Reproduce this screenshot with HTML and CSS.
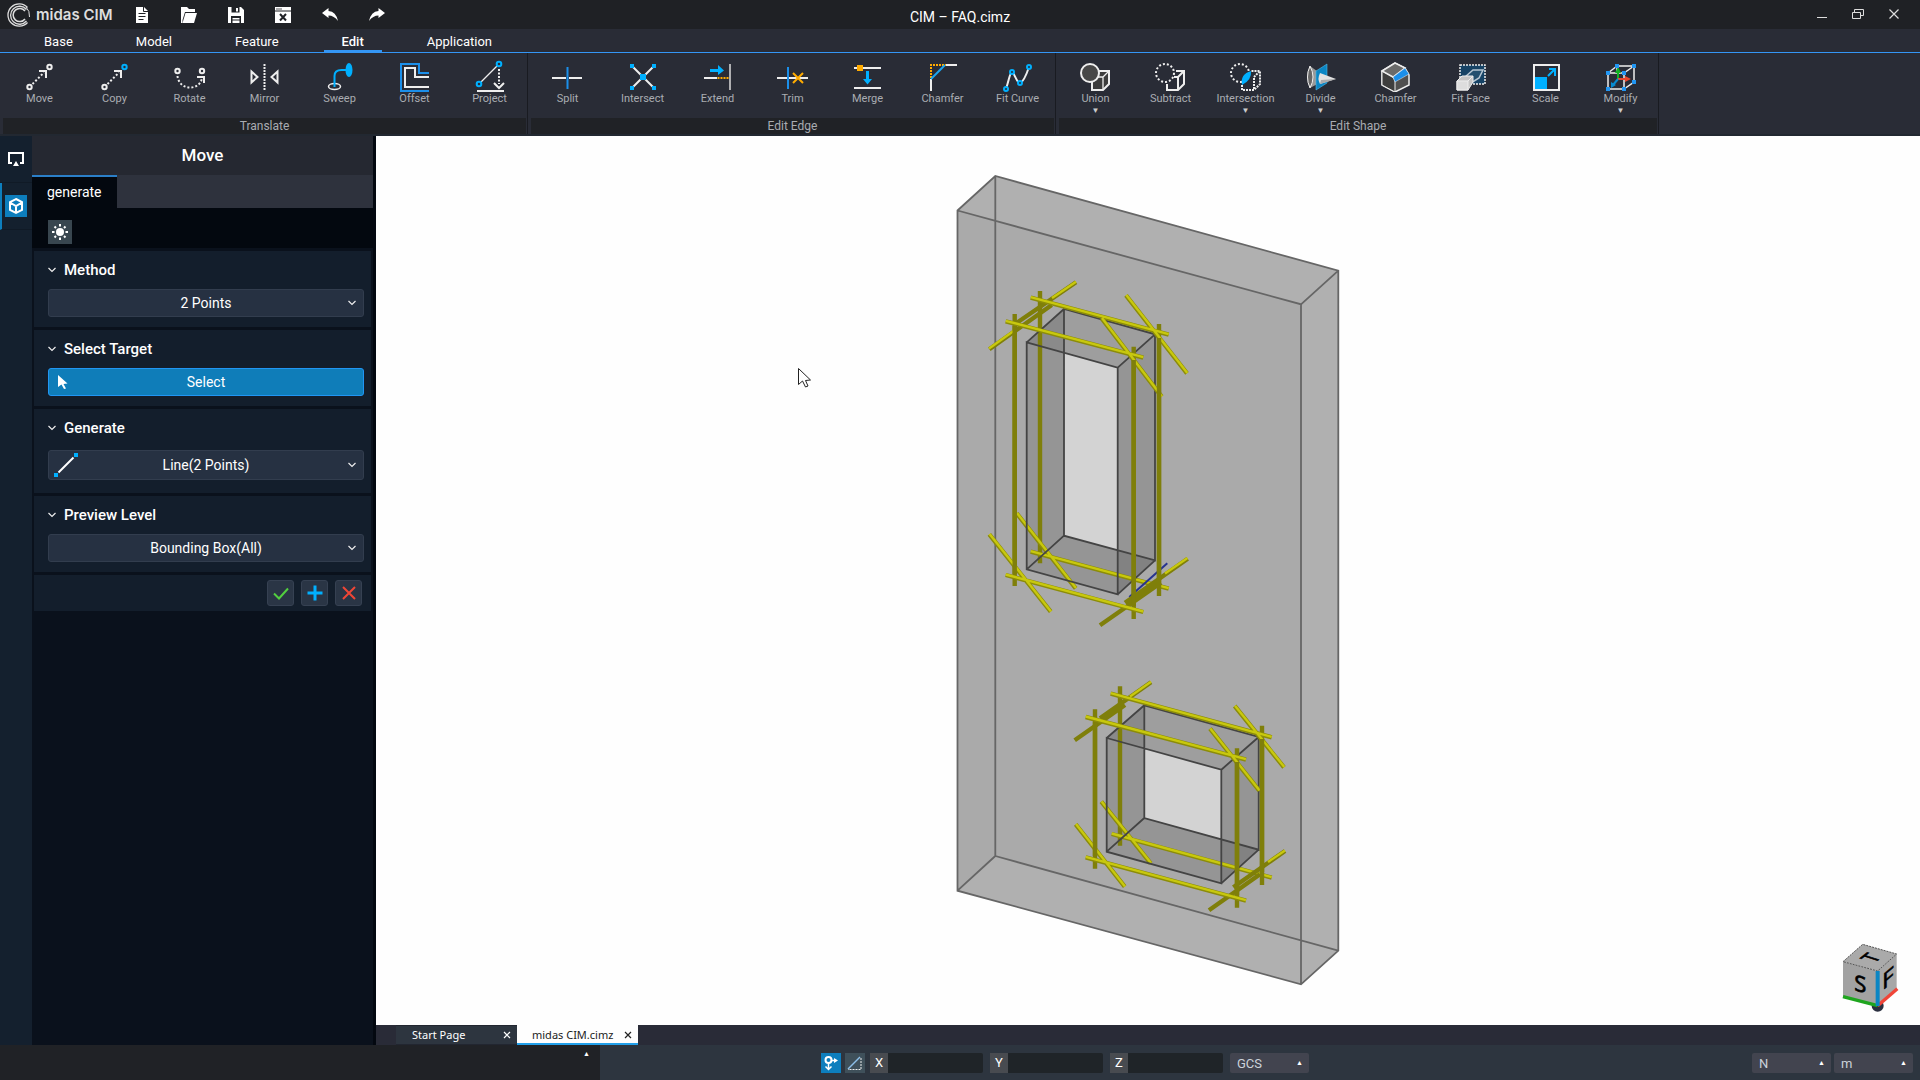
FILE: index.html
```html
<!DOCTYPE html>
<html lang="en">
<head>
<meta charset="utf-8">
<meta name="viewport" content="width=device-width, initial-scale=1">
<title>CIM – FAQ.cimz</title>
<link rel="stylesheet" href="styles.css">
</head>
<body>
<header class="titlebar">
<div class="titlebar-left">
<div class="brand">
<svg class="logo" viewBox="0 0 24 24" fill="none" stroke="#ddd"><path d="M20.500 4.500A11.200 11.200 0 1 0 20.500 19.500" stroke-width="1.300"/><path d="M19.500 6.500A9 9 0 1 0 19.500 18" stroke-width="1.300"/><path d="M18 8A6.600 6.600 0 1 0 18 16" stroke-width="1.500"/><path d="M19 4Q23 8 22.500 14" stroke-width="1"/></svg>
<span class="brand-name">midas CIM</span>
</div>
<nav class="quick" aria-label="Quick access">
<button type="button" aria-label="New"><svg viewBox="0 0 16 16"><path d="M2 0h8l4 4v12H2z" fill="#fff"/><path d="M9.500 0v4.500H14M4.500 6.500h7M4.500 9.500h7M4.500 12.500h5" stroke="#202226" fill="none"/></svg></button>
<button type="button" aria-label="Open"><svg viewBox="0 0 16 16"><path d="M0 0h6l2 2h6v3H4L1.500 13V16H0z" fill="#fff"/><path d="M4.500 6H16l-3 10H1.500z" fill="#fff"/></svg></button>
<button type="button" aria-label="Save"><svg viewBox="0 0 16 16"><path d="M0 0h13l3 3v13H0z" fill="#fff"/><path d="M3.500 0h8v5.500h-8zM3 9h10v7H3z" fill="#202226"/><path d="M8 1h2v3.500H8zM4.500 11h7v1.500h-7zM4.500 13.500h7V16h-7z" fill="#fff"/></svg></button>
<button type="button" aria-label="Close file"><svg viewBox="0 0 16 16"><path d="M0 0h16v16H0z" fill="#fff"/><path d="M0 4h16" stroke="#202226"/><path d="M1.500 2h5" stroke="#202226" stroke-width="1.500" stroke-dasharray="1 1"/><path d="M5 7l6 6.500M11 7l-6 6.500" stroke="#202226" stroke-width="2"/></svg></button>
<button type="button" aria-label="Undo"><svg viewBox="0 0 16 16"><path d="M0 6l6.500-5v3Q14 4.500 16 14 12 8.500 6.500 8.500V11z" fill="#fff"/></svg></button>
<button type="button" aria-label="Redo"><svg viewBox="0 0 16 16"><path d="M16 6L9.500 1v3Q2 4.500 0 14 4 8.500 9.500 8.500V11z" fill="#fff"/></svg></button>
</nav>
</div>
<h1 class="doc-title">CIM – FAQ.cimz</h1>
<div class="window-controls">
<button type="button" aria-label="Minimize"><svg viewBox="0 0 12 12"><path d="M1 9.500h10" stroke="#ddd"/></svg></button>
<button type="button" aria-label="Restore"><svg viewBox="0 0 12 12" fill="none" stroke="#ddd"><path d="M.5 4.500h8v6h-8zM2.500 4V1.500h9v6H9"/></svg></button>
<button type="button" aria-label="Close"><svg viewBox="0 0 12 12"><path d="M1.500 1.500l9 9M10.500 1.500l-9 9" stroke="#ddd" stroke-width="1.200"/></svg></button>
</div>
</header>

<nav class="menu">
<a href="#base">Base</a>
<a href="#model">Model</a>
<a href="#feature">Feature</a>
<a href="#edit" class="active">Edit</a>
<a href="#application">Application</a>
</nav>

<div class="ribbon">
<section class="group">
<div class="tools">
<button type="button" class="tool"><svg viewBox="0 0 32 32" fill="none" stroke="#eee" stroke-width="2"><circle cx="5.500" cy="27" r="2.200"/><circle cx="25.500" cy="7" r="2.200"/><path d="M8.500 24L20 12.500" stroke-dasharray="2 2"/><path d="M15 11h7v7"/></svg>Move</button>
<button type="button" class="tool"><svg viewBox="0 0 32 32" fill="none" stroke="#eee" stroke-width="2"><circle cx="5.500" cy="27" r="2.200"/><circle cx="25.500" cy="7" r="2.200" stroke="#00b0ff"/><path d="M8.500 24L20 12.500" stroke-dasharray="2 2"/><path d="M15 11h7v7"/></svg>Copy</button>
<button type="button" class="tool"><svg viewBox="0 0 32 32" fill="none" stroke="#eee" stroke-width="2"><circle cx="3.500" cy="11" r="2.200"/><circle cx="28" cy="11" r="2.200"/><path d="M3.500 16C5 31 26 31 28 18" stroke-dasharray="2 2"/><path d="M23 17h7v6"/></svg>Rotate</button>
<button type="button" class="tool"><svg viewBox="0 0 32 32" fill="none" stroke="#eee" stroke-width="2"><path d="M15.500 4v26" stroke-dasharray="2 1"/><path d="M2.500 11.500v11l6-5.500zM28.500 11.500v11l-6-5.500z"/></svg>Mirror</button>
<button type="button" class="tool"><svg viewBox="0 0 32 32" fill="none"><ellipse cx="10.500" cy="26.500" rx="6" ry="3" stroke="#eee" stroke-width="1.500"/><path d="M10.500 27V16q0-6 7-6h6" stroke="#00b0ff" stroke-width="2"/><ellipse cx="25" cy="10" rx="3.500" ry="7" fill="#00b0ff"/></svg>Sweep</button>
<button type="button" class="tool"><svg viewBox="0 0 32 32" fill="none" stroke-width="2"><path d="M30 13H20V4H2v27h28" stroke="#1b8fea"/><path d="M30 17H16V8H6v19h24" stroke="#eee"/></svg>Offset</button>
<button type="button" class="tool"><svg viewBox="0 0 32 32" fill="none" stroke="#eee" stroke-width="2"><path d="M7 22L23 6" stroke-width="1.300"/><circle cx="5" cy="24" r="2.300" stroke="#00b0ff"/><circle cx="25" cy="4" r="2.300" stroke="#00b0ff"/><path d="M25 9v15" stroke-dasharray="2 1.500"/><path d="M20 23l5 5 5-5M3 31h27"/></svg>Project</button>
</div>
<h2 class="group-name">Translate</h2>
</section>
<section class="group">
<div class="tools">
<button type="button" class="tool"><svg viewBox="0 0 32 32" stroke-width="2"><path d="M0 18h14M17 18h13" stroke="#eee"/><path d="M15.500 7v22" stroke="#1b8fea"/></svg>Split</button>
<button type="button" class="tool"><svg viewBox="0 0 32 32"><path d="M5 6l22 22M27 6L5 28" stroke="#eee" stroke-width="2"/><path d="M3 4h4v4H3zM25 4h4v4h-4zM3 26h4v4H3zM25 26h4v4h-4zM13 14h6v6h-6z" fill="#00b0ff"/></svg>Intersect</button>
<button type="button" class="tool"><svg viewBox="0 0 32 32" stroke-width="2"><path d="M28 4v26" stroke="#ddd" stroke-width="1.500"/><path d="M2 18h13" stroke="#eee"/><path d="M15.500 18H27" stroke="#ffab00" stroke-dasharray="2 1"/><path d="M8 9h8V5l6 5.500-6 4.500v-3H8z" fill="#00b0ff"/></svg>Extend</button>
<button type="button" class="tool"><svg viewBox="0 0 32 32" stroke-width="2"><path d="M0 18h31" stroke="#eee"/><path d="M11 7v22" stroke="#1b8fea"/><path d="M16 13l10 10M26 13L16 23" stroke="#ffab00"/></svg>Trim</button>
<button type="button" class="tool"><svg viewBox="0 0 32 32"><path d="M2 8h27M2 28h27" stroke="#eee" stroke-width="2"/><path d="M5 5h6v6H5z" fill="#ffab00"/><path d="M14 11h3v8h3l-4.500 5.500L11 19h3z" fill="#00b0ff"/></svg>Merge</button>
<button type="button" class="tool"><svg viewBox="0 0 32 32" fill="none" stroke-width="2"><path d="M4 18V5h15" stroke="#ffab00" stroke-dasharray="2 1"/><path d="M19 5h11M4 19v12" stroke="#eee"/><path d="M4 19L18 5" stroke="#1ba6f0"/></svg>Chamfer</button>
<button type="button" class="tool"><svg viewBox="0 0 32 32" fill="#292c36" stroke-width="2"><path d="M4 29C7 20 8 12 10 12s5 12 8 11S25 13 27 7" fill="none" stroke="#eee"/><g stroke="#00b0ff"><circle cx="4" cy="29" r="2"/><circle cx="10" cy="12" r="2"/><circle cx="18" cy="23" r="2"/><circle cx="27" cy="7" r="2"/></g></svg>Fit Curve</button>
</div>
<h2 class="group-name">Edit Edge</h2>
</section>
<section class="group">
<div class="tools">
<button type="button" class="tool"><svg viewBox="0 0 32 32" stroke="#eee" stroke-width="2"><path d="M12 17l6-6h11v13l-6 6H12z" fill="#3c3c3c"/><path d="M12 17h11v13M23 17l6-6" fill="none" stroke-width="1.300"/><circle cx="10" cy="13" r="9" fill="#484848"/></svg>Union<span class="more">▼</span></button>
<button type="button" class="tool"><svg viewBox="0 0 32 32" fill="none" stroke="#eee" stroke-width="2"><path d="M12 24v6h11l6-6V11h-8M23 30V17h-4M23 17l6-6"/><circle cx="10" cy="13" r="9" stroke-dasharray="2 2"/></svg>Subtract</button>
<button type="button" class="tool"><svg viewBox="0 0 32 32" fill="none" stroke="#eee" stroke-width="2"><path d="M12 25v5h12l6-6V11h-9M24 29V17l5-5" stroke-dasharray="2 1"/><circle cx="10" cy="13" r="9" stroke-dasharray="2 2"/><path d="M12 25q-2-11 9-14 1 9-9 14z" fill="#00b0ff" stroke="none"/></svg>Intersection<span class="more">▼</span></button>
<button type="button" class="tool"><svg viewBox="0 0 32 32"><path d="M5 6l11 8v8L5 28q-6-11 0-22z" fill="#999"/><path d="M5 6q6 11 0 22Q0 17 5 6z" fill="#666" stroke="#eee"/><path d="M11 11L22 4v19l-11 7z" fill="#0b86c4" stroke="#53b9e8" stroke-width=".6"/><path d="M15 13l16 6-16 5q-3-5 0-11z" fill="#e2e2e2"/><path d="M16 20l15-1-16 5z" fill="#aaa"/></svg>Divide<span class="more">▼</span></button>
<button type="button" class="tool"><svg viewBox="0 0 32 32" stroke="#eee" stroke-width="1.500"><path d="M15 3l10 5 4 7v10l-14 7-13-7V11z" fill="#505050"/><path d="M2 11l11 6 2 4v11L2 25z" fill="#3e3e3e" stroke-width="1"/><path d="M15 3L2 11l11 6 12-9z" fill="#6a6a6a"/><path d="M13 17l12-9 4 6-14 8z" fill="#1b8fea" stroke-width=".5"/></svg>Chamfer</button>
<button type="button" class="tool"><svg viewBox="0 0 32 32" stroke="#eee"><path d="M5 5h25v19H5z" fill="#174365" stroke-width="1.500" stroke-dasharray="2 1"/><path d="M10 17l8-7h10l-4 8-8 5z" fill="#24506f" stroke="#b7c6d2" stroke-width="1.500"/><path d="M2 21l5-5h11v6l-5 8H2z" fill="#c5c5c5"/><path d="M2 21h11v9H2z" fill="#ddd"/><path d="M13 21l5-5"/></svg>Fit Face</button>
<button type="button" class="tool"><svg viewBox="0 0 32 32"><path d="M4 5h25v25H4z" fill="none" stroke="#eee" stroke-width="2"/><path d="M5 17h12v12H5z" fill="#00b0ff"/><path d="M18 16l7-7M19 9h6v7" fill="none" stroke="#00b0ff" stroke-width="2"/></svg>Scale</button>
<button type="button" class="tool"><svg viewBox="0 0 32 32" fill="none" stroke-width="2"><path d="M3 13h16v16H3zM12 6h17v16L19 29M3 13l9-7M19 13l10-7M12 6v6" stroke="#eee" stroke-width="1.500"/><path d="M13 19V11" stroke="#13b324"/><path d="M10 13l3-6 3 6z" fill="#13b324"/><path d="M13 19h8" stroke="#e8452c"/><path d="M20 16l6 3-6 3z" fill="#e8452c"/><path d="M13 19l-5 6" stroke="#078bd0"/><path d="M6 22v6l5-3z" fill="#078bd0"/><path d="M1 11h4v4H1zM17 11h4v4h-4zM1 27h4v4H1zM17 27h4v4h-4zM10 4h4v4h-4zM27 4h4v4h-4zM27 20h4v4h-4z" fill="#2196f3"/></svg>Modify<span class="more">▼</span></button>
</div>
<h2 class="group-name">Edit Shape</h2>
</section>
</div>

<div class="workspace">
<nav class="rail" aria-label="Panels">
<button type="button" aria-label="Display"><svg class="rail-icon" viewBox="0 0 22 22"><path d="M7 15H4V5h14v10h-3" fill="none" stroke="#fff" stroke-width="2"/><path d="M11 13l3 5H8z" fill="#fff"/></svg></button>
<button type="button" class="active" aria-label="Model"><svg class="rail-icon" viewBox="0 0 22 22" fill="none" stroke="#fff" stroke-width="2"><path d="M11 4l6 3v8l-6 3-6-3V7zM5 7.500l6 3.500 6-3.500M11 11v7"/></svg></button>
</nav>
<aside class="panel">
<h2 class="panel-title">Move</h2>
<div class="panel-tabs"><button type="button">generate</button></div>
<div class="panel-tools"><button type="button" aria-label="Highlight"><svg viewBox="0 0 24 24"><circle cx="12" cy="12" r="4" fill="#fff"/><path d="M12 4v2.500M12 17.500V20M4 12h2.500M17.500 12H20M6.500 6.500l1.500 1.500M16 16l1.500 1.500M17.500 6.500L16 8M8 16l-1.500 1.500" stroke="#fff" stroke-width="2"/></svg></button></div>
<form class="panel-form">
<details class="block" open>
<summary><svg class="chev" viewBox="0 0 8 8"><path d="M.5 2L4 5.500 7.500 2"/></svg><label for="method">Method</label></summary>
<div class="field">
<select id="method"><option>2 Points</option></select>
<svg class="chev drop" viewBox="0 0 8 8"><path d="M.5 2L4 5.500 7.500 2"/></svg>
</div>
</details>
<details class="block" open>
<summary><svg class="chev" viewBox="0 0 8 8"><path d="M.5 2L4 5.500 7.500 2"/></svg>Select Target</summary>
<button type="button" class="pick"><svg viewBox="0 0 10 14"><path d="M0 0l9.500 8.500-4 .5 2.500 4.500-2 .5-2.500-4.500L0 12z" fill="#fff"/></svg>Select</button>
</details>
<details class="block" open>
<summary><svg class="chev" viewBox="0 0 8 8"><path d="M.5 2L4 5.500 7.500 2"/></svg><label for="generate">Generate</label></summary>
<div class="field tall">
<select id="generate"><option>Line(2 Points)</option></select>
<svg class="line-icon" viewBox="0 0 24 24"><path d="M4.500 19.500L19.500 4.500" stroke="#fff" stroke-width="2"/><path d="M0 20h4v4H0zM20 0h4v4h-4z" fill="#00b0ff"/></svg>
<svg class="chev drop" viewBox="0 0 8 8"><path d="M.5 2L4 5.500 7.500 2"/></svg>
</div>
</details>
<details class="block" open>
<summary><svg class="chev" viewBox="0 0 8 8"><path d="M.5 2L4 5.500 7.500 2"/></svg><label for="preview">Preview Level</label></summary>
<div class="field">
<select id="preview"><option>Bounding Box(All)</option></select>
<svg class="chev drop" viewBox="0 0 8 8"><path d="M.5 2L4 5.500 7.500 2"/></svg>
</div>
</details>
<div class="actions">
<button type="button" aria-label="OK"><svg viewBox="0 0 16 16"><path d="M1 8.500l5 5L15 3.500" stroke="#52cf3f"/></svg></button>
<button type="button" aria-label="Apply"><svg viewBox="0 0 16 16"><path d="M8 .5v15M.5 8h15" stroke="#00b0ff" stroke-width="3"/></svg></button>
<button type="button" aria-label="Cancel"><svg viewBox="0 0 16 16"><path d="M2 2l12 12M14 2L2 14" stroke="#ef4636"/></svg></button>
</div>
</form>
</aside>

<main class="stage">
<div class="canvas">
<svg class="scene" viewBox="376 136 1544 889">
<!-- wall -->
<path d="M957.500 210.500L995.300 176 1338.300 270.700V950.700L1301 984.300 957.500 890.700z" fill="#b0b0b0"/>
<path d="M957.500 210.500L1301 304.300V940.400L995.300 856 957.500 890.700z" fill="#aaa"/>
<g class="edge">
<path d="M957.500 210.500L995.300 176 1338.300 270.700V950.700L1301 984.300 957.500 890.700zM957.500 210.500L1301 304.300V984.300M1301 304.300L1338.300 270.700M995.300 176V856L957.500 890.700M995.300 856L1338.300 950.700"/>
</g>
<!-- upper opening -->
<g class="shade">
<path d="M1026.700 342.300L1064 309V535.700L1026.700 569.300z"/>
<path d="M1117.700 367.700L1155 334.300V560.300L1117.700 594.300z"/>
<path class="soft" d="M1026.700 342.300L1064 309 1155 334.300 1117.700 367.700z"/>
<path d="M1026.700 569.300L1064 535.700 1155 560.300 1117.700 594.300z"/>
</g>
<path d="M1064 352.700L1117.700 367.700V550.200L1064 535.700z" fill="#d3d3d3"/>
<path class="bar dark" d="M1040 291V563.300"/>
<path class="bar" d="M1030.700 551.700L1168.700 588.700M1016.700 513.300L1075.700 588.300"/>
<path class="shine" d="M1030.700 551.200L1168.700 588.200M1017 513L1076 588"/>
<path class="edge strong" d="M1026.700 342.300L1117.700 367.700V594.300L1026.700 569.300zM1064 309L1155 334.300V560.300L1064 535.700zM1026.700 342.300L1064 309M1117.700 367.700L1155 334.300M1026.700 569.300L1064 535.700M1117.700 594.300L1155 560.300"/>
<path d="M1129.300 597L1167.300 563.300" stroke="#26338f" stroke-width="2"/>
<path class="bar dark" d="M989.300 349.300L1051.700 305M1015 324L1076 282.300M1100 625.300L1161 582.700M1125 602.700L1187.700 558.700"/>
<path class="bar dark" d="M1014.700 314V586M1133.700 346.700V619M1159 324V596"/>
<path class="bar" d="M1005.700 321.300L1143.300 357.700M1030.700 297.700L1168.700 334.700M1005.700 575L1143.300 612M1126 295.300L1187 373.300M1101.700 318.300L1161.700 396.700M989.300 534.300L1050.700 611.700"/>
<path class="shine" d="M1005.700 320.800L1143.300 357.200M1030.700 297.200L1168.700 334.200M1005.700 574.500L1143.300 611.500M1126.300 295L1187.300 373M1102 318L1162 396.400M989.600 534L1051 611.400M989 348.600L1015 330M1052 298L1076 281.800M1165 573.500L1187.500 558"/>
<path class="bar dark" d="M1133.700 360V606M1159 338V583M1014.700 326V574"/>
<!-- lower opening -->
<g class="shade">
<path d="M1106.700 738L1144.300 705.300V818L1106.700 851.700z"/>
<path d="M1221.300 769.700L1258.700 737V849.700L1221.300 883.300z"/>
<path class="soft" d="M1106.700 738L1144.300 705.300 1258.700 737 1221.300 769.700z"/>
<path d="M1106.700 851.700L1144.300 818 1258.700 849.700 1221.300 883.300z"/>
</g>
<path d="M1144.300 748.400L1221.300 769.700V839.300L1144.300 818z" fill="#d3d3d3"/>
<path class="bar dark" d="M1120 686.300V845.700"/>
<path class="bar" d="M1111.700 834L1271.700 877.700M1101.300 801.700L1150.700 863.300"/>
<path class="shine" d="M1111.700 833.500L1271.700 877.200M1101.600 801.400L1151 863"/>
<path class="edge strong" d="M1106.700 738L1221.300 769.700V883.300L1106.700 851.700zM1144.300 705.300L1258.700 737V849.700L1144.300 818zM1106.700 738L1144.300 705.300M1221.300 769.700L1258.700 737M1106.700 851.700L1144.300 818M1221.300 883.300L1258.700 849.700"/>
<path class="bar dark" d="M1074.700 740.300L1125 705M1100 718.300L1151 682.300M1209 910.300L1260 874.300M1233.300 887.300L1285 851"/>
<path class="bar dark" d="M1095 709.300V868.700M1237 748.300V907.700M1262 725.700V885"/>
<path class="bar" d="M1085.700 717L1246 759.700M1110.700 693.700L1271.700 737.300M1085.700 857.300L1246 900.700M1234.700 706L1284 767.300M1210 728.700L1259.300 790.700M1075.700 824.300L1124.700 886.700"/>
<path class="shine" d="M1085.700 716.500L1246 759.200M1110.700 693.200L1271.700 736.800M1085.700 856.800L1246 900.200M1235 705.700L1284.300 767M1210.300 728.400L1259.600 790.400M1076 824L1125 886.400M1130 696.500L1151 681.800M1268 862L1285 850.400"/>
<path class="bar dark" d="M1237 762V895M1262 739V872M1095 722V856"/>
<!-- pointer -->
<path d="M798.500 368.500v16l4-3.500 3 6 2.500-1-2.500-5.500 5-.5z" fill="#fff" stroke="#222"/>
</svg>
<svg class="viewcube" viewBox="420 60 180 225">
<circle cx="533" cy="257" r="18" fill="#2b2f3f"/>
<path d="M429 125L533 153V257L429 230z" fill="#a2a2a2"/>
<path d="M533 153L590 102V206L533 257z" fill="#a7a7a7"/>
<path d="M429 125L488 73 590 102 533 153z" fill="#aaa" stroke="#555" stroke-width="3" stroke-dasharray="6 3"/>
<text class="face" x="0" y="0" transform="translate(463 211) skewY(14)">S</text>
<text class="face" x="0" y="0" transform="translate(547 212) skewY(-40)">F</text>
<text class="face top" x="0" y="0" transform="translate(523 130) rotate(-38) skewX(34)">T</text>
<path d="M429 230L533 257" stroke="#1ea51e" stroke-width="10"/>
<path d="M533 257L592 206" stroke="#f04538" stroke-width="10"/>
<path d="M533 153V258" stroke="#0b86c4" stroke-width="12"/>
</svg>
</div>
<div class="doc-tabs">
<div class="doc-tab"><a href="#start">Start Page</a><button type="button" aria-label="Close Start Page"><svg viewBox="0 0 8 8"><path d="M1 1l6 6M7 1L1 7"/></svg></button></div>
<div class="doc-tab current"><a href="#file">midas CIM.cimz</a><button type="button" aria-label="Close midas CIM.cimz"><svg viewBox="0 0 8 8"><path d="M1 1l6 6M7 1L1 7"/></svg></button></div>
</div>
</main>
</div>

<footer class="status">
<div class="message"><button type="button" aria-label="Show messages">▲</button></div>
<div class="coords">
<button type="button" class="snap on" aria-label="Snap"><svg viewBox="0 0 20 20" fill="none" stroke="#fff" stroke-width="2"><circle cx="7.500" cy="7" r="3"/><path d="M7.500 10v6M4.500 13.500l3 3 3-3M11 7.500h4" stroke-width="1.500"/><path d="M13 5l4 2.500-4 2.500z" fill="#fff" stroke="none"/></svg></button>
<button type="button" class="snap" aria-label="Work plane"><svg viewBox="0 0 20 20" fill="none"><path d="M3 16L15 4" stroke="#8ec0ea" stroke-width="1.500"/><path d="M16 5v11.500H3" stroke="#eee" stroke-dasharray="2 1"/></svg></button>
<div class="coord"><label for="cx">X</label><input id="cx" type="text"></div>
<div class="coord"><label for="cy">Y</label><input id="cy" type="text"></div>
<div class="coord"><label for="cz">Z</label><input id="cz" type="text"></div>
<div class="unit"><select aria-label="Coordinate system"><option>GCS</option></select><span>▲</span></div>
</div>
<div class="units">
<div class="unit"><select aria-label="Force unit"><option>N</option></select><span>▲</span></div>
<div class="unit"><select aria-label="Length unit"><option>m</option></select><span>▲</span></div>
</div>
</footer>
</body>
</html>
```
FILE: styles.css
```css
* {
 box-sizing: border-box;
}
body {
 margin: 0;
 height: 100vh;
 display: flex;
 flex-direction: column;
 overflow: hidden;
 background: #202226;
 color: #fff;
 font-family: Roboto, "Liberation Sans", sans-serif;
 font-size: 14px;
}
button, input, select {
 margin: 0;
 padding: 0;
 border: 0;
 background: none;
 color: inherit;
 font: inherit;
}
select {
 appearance: none;
}
h1, h2 {
 margin: 0;
 font-weight: normal;
}
a {
 color: inherit;
 text-decoration: none;
}
svg {
 display: block;
}

/* title bar */
.titlebar {
 display: grid;
 grid-template-columns: 1fr auto 1fr;
 align-items: center;
 height: 29px;
 background: #1f2125;
}
.titlebar-left {
 display: flex;
 align-items: center;
 gap: 22px;
 padding-left: 7px;
}
.brand {
 display: flex;
 align-items: center;
 gap: 5px;
}
.logo {
 width: 24px;
 height: 24px;
}
.brand-name {
 color: #ddd;
 font: 600 15px/20px Inter, sans-serif;
}
.quick {
 display: flex;
 gap: 31px;
}
.quick svg {
 width: 16px;
 height: 16px;
}
.doc-title {
 padding-top: 4px;
 font-size: 14px;
 line-height: 20px;
}
.window-controls {
 display: flex;
 justify-content: flex-end;
 gap: 24px;
 padding: 0 20px 2px 0;
}
.window-controls svg {
 width: 12px;
 height: 12px;
}

/* menu */
.menu {
 display: flex;
 gap: 27px;
 height: 24px;
 padding-left: 26px;
 background: #292c36;
 border-bottom: 1px solid #3496f5;
}
.menu a {
 padding: 0 18px;
 font-size: 13px;
 line-height: 26px;
}
.menu .active {
 font-weight: 500;
 border-bottom: 2px solid #3496f5;
}

/* ribbon */
.ribbon {
 display: flex;
 height: 83px;
 background: #292c36;
 border-bottom: 2px solid #222831;
}
.group {
 padding-left: 2px;
 border-right: 1px solid #191b21;
}
.tools {
 display: flex;
 height: 65px;
}
.tool {
 display: flex;
 flex-direction: column;
 align-items: center;
 width: 75px;
 padding-top: 7px;
 color: #a9acb2;
 font-size: 11px;
 line-height: 14px;
}
.tool svg {
 width: 32px;
 height: 32px;
}
.more {
 font-size: 8px;
 line-height: 10px;
 color: #ccc;
}
.group-name {
 margin: 0 1px;
 background: #202226;
 color: #a9acb2;
 font-size: 12px;
 line-height: 16px;
 text-align: center;
}

/* left side */
.workspace {
 flex: 1;
 display: flex;
 min-height: 0;
}
.rail {
 width: 32px;
 background: #14202e;
}
.rail button {
 display: flex;
 align-items: center;
 width: 100%;
 height: 47px;
 padding-left: 5px;
 border-bottom: 1px solid #101a26;
}
.rail .active {
 padding-left: 3px;
 border-left: 2px solid #0d7ebd;
}
.rail .active svg {
 background: #0d7ebd;
}
.rail-icon {
 width: 22px;
 height: 22px;
}
.panel {
 width: 344px;
 background: #0a111c;
 border-right: 3px solid #030810;
}
.panel-title {
 background: #252831;
 font-size: 17px;
 font-weight: 500;
 line-height: 39px;
 text-align: center;
}
.panel-tabs {
 height: 33px;
 background: #2e323d;
}
.panel-tabs button {
 height: 33px;
 padding: 0 15px;
 background: #03080f;
 border-top: 2px solid #2b7fc8;
 line-height: 31px;
}
.panel-tools {
 height: 40px;
 padding: 12px 16px 0;
 background: #03080f;
}
.panel-tools button {
 width: 24px;
 height: 24px;
 background: #38464f;
}
.panel-form {
 display: flex;
 flex-direction: column;
 gap: 3px;
 padding: 3px 2px 0 2px;
}
.block {
 padding: 8px 7px 10px 14px;
 background: #131e2c;
}
summary {
 display: flex;
 align-items: center;
 gap: 8px;
 height: 22px;
 margin-bottom: 8px;
 font-size: 15px;
 font-weight: 500;
 list-style: none;
}
.chev {
 width: 8px;
 height: 8px;
 fill: none;
 stroke: #eee;
 stroke-width: 1.2;
}
.field {
 position: relative;
}
.field select {
 width: 100%;
 height: 28px;
 background: #263142;
 border: 1px solid #323d4e;
 border-radius: 3px;
 text-align: center;
 text-align-last: center;
}
.tall {
 padding: 3px 0;
}
.tall select {
 height: 30px;
}
.drop {
 position: absolute;
 right: 8px;
 top: 50%;
 margin-top: -4px;
 pointer-events: none;
}
.line-icon {
 position: absolute;
 left: 6px;
 top: 6px;
 width: 24px;
 height: 24px;
 pointer-events: none;
}
.pick {
 display: grid;
 grid-template-columns: 1fr auto 1fr;
 align-items: center;
 width: 100%;
 height: 28px;
 padding: 0 9px;
 background: #0f7db9;
 border: 1px solid #2196f3;
 border-radius: 3px;
}
.pick svg {
 width: 10px;
 height: 14px;
}
.actions {
 display: flex;
 justify-content: flex-end;
 gap: 7px;
 padding: 5px 9px;
 background: #131e2c;
}
.actions button {
 display: grid;
 place-items: center;
 width: 27px;
 height: 26px;
 background: #2a3545;
 border: 1px solid #364152;
 border-radius: 3px;
}
.actions svg {
 width: 16px;
 height: 16px;
 fill: none;
 stroke-width: 2;
}

/* drawing area */
.stage {
 flex: 1;
 display: flex;
 flex-direction: column;
 min-width: 0;
}
.canvas {
 position: relative;
 flex: 1;
 min-height: 0;
 background: #fefefe;
}
.scene {
 width: 100%;
 height: 100%;
}
.edge {
 fill: none;
 stroke: #666;
 stroke-width: 1.8;
}
.strong {
 stroke: #444;
}
.shade {
 fill: #000;
 fill-opacity: .12;
}
.soft {
 fill-opacity: .07;
}
.bar {
 fill: none;
 stroke: #8c8c0a;
 stroke-width: 4.4;
}
.dark {
 stroke: #7f7f0a;
}
.shine {
 fill: none;
 stroke: #c8c80e;
 stroke-width: 2.4;
}
.viewcube {
 position: absolute;
 right: 20px;
 bottom: 10px;
 width: 60px;
 height: 75px;
}
.face {
 font: 66px "Noto Sans", sans-serif;
 fill: #000;
 stroke: #000;
 stroke-width: 2;
}
.top {
 font-size: 54px;
}
.doc-tabs {
 display: flex;
 height: 20px;
 padding-left: 20px;
 background: #292b37;
}
.doc-tab {
 display: flex;
 align-items: center;
 justify-content: space-between;
 width: 121px;
 padding: 0 6px 0 16px;
 background: #2d353f;
 border-top: 1px solid #222630;
 border-bottom: 1px solid #222630;
 font: 11px/16px "Noto Sans", sans-serif;
}
.doc-tab svg {
 width: 8px;
 height: 8px;
 stroke: currentColor;
 stroke-width: 1.2;
}
.current {
 padding-left: 15px;
 background: #fefefe;
 border-top-color: #fefefe;
 border-bottom: 2px solid #22a0ea;
 color: #222;
}

/* status bar */
.status {
 display: flex;
 height: 35px;
 background: #2d353f;
 font-size: 13px;
}
.message {
 width: 600px;
 padding: 4px 10px 0;
 background: #202226;
 text-align: right;
}
.message button, .unit span {
 font-size: 7px;
 line-height: 11px;
}
.message button {
 display: block;
 margin-left: auto;
}
.coords {
 flex: 1;
 display: flex;
 align-items: flex-start;
 gap: 7px;
 padding: 8px 0 0 221px;
}
.snap {
 width: 20px;
 height: 20px;
 background: #3f505a;
}
.on {
 margin-right: -3px;
 background: #0d7ebd;
}
.snap + .coord {
 margin-left: -2px;
}
.coord {
 display: flex;
 width: 113px;
 height: 20px;
}
.coord label {
 width: 18px;
 background: #484b50;
 line-height: 20px;
 text-align: center;
}
.coord input {
 flex: 1;
 min-width: 0;
 background: #1f2428;
 border-radius: 0 2px 2px 0;
}
.unit {
 position: relative;
}
.unit select {
 display: block;
 width: 79px;
 height: 20px;
 padding-left: 7px;
 background: #42444f;
 border-radius: 2px;
 color: #ccd3da;
}
.unit span {
 position: absolute;
 right: 6px;
 top: 5px;
 pointer-events: none;
}
.units {
 display: flex;
 gap: 3px;
 padding: 8px 7px 0 0;
}
```
